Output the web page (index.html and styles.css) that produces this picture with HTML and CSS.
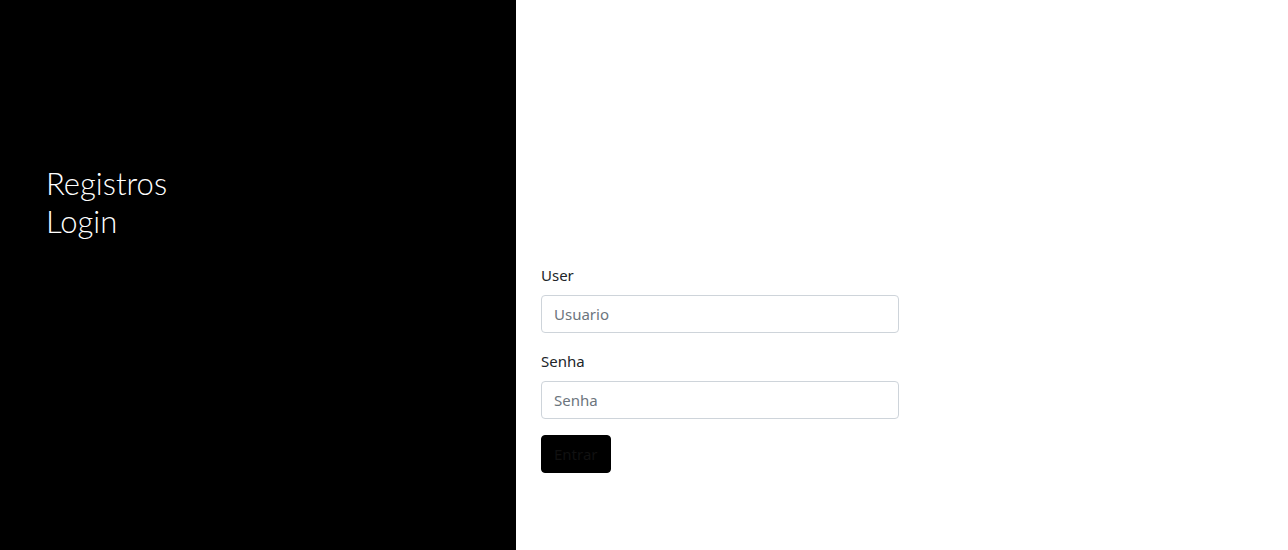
FILE: index.html
```html
<!DOCTYPE html>
<html lang="pt">
<head>
<meta charset="utf-8">
<title>Registros Login</title>
<link rel="stylesheet" href="styles.css">
</head>
<body>
<div class="page">
  <aside class="side">
    <h1 class="side-title">Registros<br>Login</h1>
  </aside>
  <main class="main">
    <form class="login">
      <div class="group">
        <label class="label" for="user">User</label>
        <input class="input" id="user" type="text" placeholder="Usuario">
      </div>
      <div class="group">
        <label class="label" for="pass">Senha</label>
        <input class="input" id="pass" type="password" placeholder="Senha">
      </div>
      <button class="btn" type="button">Entrar</button>
    </form>
  </main>
</div>
</body>
</html>
```
FILE: styles.css
```css
* { box-sizing: border-box; }
html, body { margin: 0; height: 100%; }
body {
  font-family: "Noto Sans", "Open Sans", sans-serif;
  font-size: 15px;
  line-height: 24px;
  color: #212529;
  background: #fff;
}
.page {
  display: flex;
  height: 550px;
}
.side {
  width: 516px;
  flex: none;
  background: #000;
  padding: 164px 0 0 46px;
}
.side-title {
  margin: 0;
  color: #fff;
  font-family: "Lato", "Noto Sans", sans-serif;
  font-weight: 300;
  font-size: 31px;
  line-height: 38px;
}
.main {
  flex: 1;
  padding: 263px 0 0 25px;
}
.login { width: 358px; }
.group { margin-bottom: 16px; }
.label {
  display: inline-block;
  margin-bottom: 8px;
}
.input {
  display: block;
  width: 100%;
  height: 38px;
  padding: 6px 12px;
  font: inherit;
  color: #495057;
  background: #fff;
  border: 1px solid #ced4da;
  border-radius: 4px;
}
.input::placeholder { color: #6c757d; opacity: 1; }
.btn {
  display: block;
  height: 38px;
  padding: 6px 12px;
  font: inherit;
  color: #111;
  background: #000;
  border: 1px solid #000;
  border-radius: 4px;
}
```
